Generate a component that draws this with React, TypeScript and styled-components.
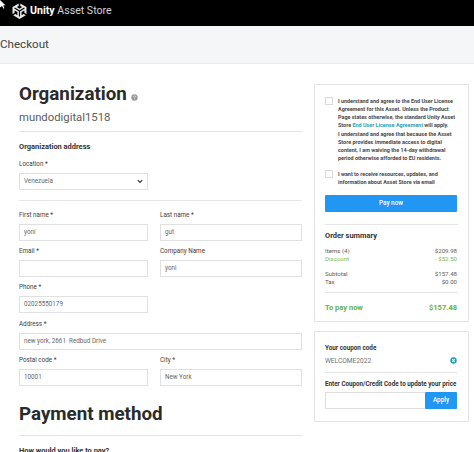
import React from "react";
import styled, { createGlobalStyle } from "styled-components";

const GlobalStyle = createGlobalStyle`
  * { box-sizing: border-box; }
  html, body { margin: 0; padding: 0; }
  body { background: #fff; font-family: Roboto, sans-serif; color: #333; }
  #root { width: 474px; height: 452px; overflow: hidden; }
`;

const Page = styled.div`
  width: 474px;
  height: 452px;
  overflow: hidden;
  display: flex;
  flex-direction: column;
`;

const TopBar = styled.header`
  flex: none;
  position: relative;
  height: 26px;
  background: #000;
  display: flex;
  align-items: center;
  padding: 0 0 4px 12px;
  gap: 3px;
  svg { flex: none; }
`;

const Cursor = styled.svg`
  position: absolute;
  left: 0;
  top: 0;
`;

const Brand = styled.span`
  color: #d4d4d4;
  font-size: 10.6px;
  line-height: 14px;
  white-space: nowrap;
  b { color: #fff; font-weight: 700; }
`;

const SubBar = styled.div`
  flex: none;
  height: 38px;
  background: #f5f6f7;
  border-bottom: 1px solid #ececec;
  font-size: 11.6px;
  line-height: 36px;
  color: #444;
`;

const Columns = styled.main`
  display: flex;
  align-items: flex-start;
  gap: 12px;
  padding-left: 19px;
`;

const FormColumn = styled.section`
  width: 283px;
  padding-top: 18px;
`;

const SideColumn = styled.aside`
  width: 155px;
  padding-top: 20px;
  display: flex;
  flex-direction: column;
  gap: 9px;
`;

const Line = styled.div<{
  $h: number; $size: number; $weight?: number; $color?: string; $mt?: number;
}>`
  height: ${(p) => p.$h}px;
  line-height: ${(p) => p.$h}px;
  margin-top: ${(p) => p.$mt ?? 0}px;
  font-size: ${(p) => p.$size}px;
  font-weight: ${(p) => p.$weight ?? 400};
  color: ${(p) => p.$color ?? "#333"};
  white-space: nowrap;
`;

const Title = styled.h1`
  margin: 0;
  height: 24px;
  display: flex;
  align-items: center;
  gap: 4px;
  font-size: 18.75px;
  font-weight: 700;
  color: #2a2a2a;
  white-space: nowrap;
  svg { margin-top: 6px; }
`;

const Rule = styled.hr<{ $mt: number }>`
  height: 1px;
  border: 0;
  margin: ${(p) => p.$mt}px 0 0;
  background: #e6e6e6;
`;

const Row = styled.div<{ $mt: number }>`
  display: grid;
  grid-template-columns: 129px 142px;
  column-gap: 12px;
  margin-top: ${(p) => p.$mt}px;
`;

const WideRow = styled.div`
  margin-top: 6px;
`;

const FieldLabel = styled.label`
  display: block;
  height: 10px;
  margin-bottom: 4px;
  font-size: 6.3px;
  line-height: 10px;
  color: #3c3c3c;
  white-space: nowrap;
`;

const Box = styled.div`
  height: 17px;
  border: 1px solid #e0e0e0;
  padding: 0 4px;
  display: flex;
  align-items: center;
  justify-content: space-between;
  font-size: 6.3px;
  line-height: 15px;
  color: #666;
  white-space: pre;
`;

const Card = styled.div<{ $h: number }>`
  height: ${(p) => p.$h}px;
  border: 1px solid #e4e4e4;
  padding: 0 10px;
`;

const Consent = styled.div<{ $mt: number }>`
  display: flex;
  gap: 5px;
  margin-top: ${(p) => p.$mt}px;
`;

const Check = styled.span`
  flex: none;
  width: 8px;
  height: 8px;
  border: 1px solid #dadada;
`;

const ConsentText = styled.div`
  font-size: 5.45px;
  font-weight: 700;
  line-height: 8.13px;
  color: #484848;
  white-space: nowrap;
`;

const ConsentLine = styled.span`
  display: block;
  em { font-style: normal; color: #2aa3b8; }
`;

const Button = styled.button`
  display: block;
  flex: none;
  border: 0;
  border-radius: 1px;
  padding: 0;
  background: #2196f3;
  color: #fff;
  font: 500 6.4px/17px Roboto, sans-serif;
  height: 17px;
`;

const PayButton = styled(Button)`
  width: 132px;
  margin-top: 9px;
`;

const Pair = styled.div<{ $mt?: number; $color?: string; $size?: number; $weight?: number }>`
  display: flex;
  justify-content: space-between;
  height: 8px;
  line-height: 8px;
  width: 132px;
  margin-top: ${(p) => p.$mt ?? 0}px;
  font-size: ${(p) => p.$size ?? 6.1}px;
  font-weight: ${(p) => p.$weight ?? 400};
  color: ${(p) => p.$color ?? "#606060"};
  white-space: nowrap;
`;

const CouponRow = styled.div`
  display: flex;
  align-items: center;
  justify-content: space-between;
  width: 132px;
  height: 10px;
  margin-top: 3px;
  font-size: 6.6px;
  color: #707070;
  svg { margin-bottom: 2px; }
`;

const ApplyRow = styled.div`
  display: flex;
  width: 132px;
  margin-top: 3px;
`;

const CodeInput = styled.div`
  flex: 1;
  height: 17px;
  border: 1px solid #dedede;
  border-right: 0;
`;

const ApplyButton = styled(Button)`
  width: 32px;
`;

const CubeLogo = () => (
  <svg width="15" height="16" viewBox="0 0 15 16">
    <path d="M6.7 0.5V3L4.8 4.1 7.5 5.7 10.2 4.1 8.3 3V0.5L14.5 4V11L12.4 9.8V7.4L9.6 9V12.2L11.6 11 13.8 12.3 7.5 15.9 1.2 12.3 3.4 11 5.4 12.2V9L2.6 7.4V9.8L0.5 11V4z" fill="#e9e9e9" />
    <path d="M2.6 5.1 7.5 8 12.4 5.1M7.5 8V13.6" stroke="#000" strokeWidth="1.2" fill="none" />
  </svg>
);

const Help = () => (
  <svg width="7" height="7" viewBox="0 0 7 7">
    <circle cx="3.5" cy="3.5" r="3.2" fill="#999" />
    <path d="M2.5 2.8Q2.6 1.9 3.5 1.9T4.5 2.8Q4.5 3.3 3.5 3.8V4.2M3.5 4.8v.6" stroke="#eee" strokeWidth=".7" fill="none" />
  </svg>
);

const Chevron = () => (
  <svg width="6" height="5" viewBox="0 0 6 5">
    <path d="M.8 1.2 3 3.4 5.2 1.2" stroke="#333" strokeWidth="1.2" fill="none" />
  </svg>
);

const Remove = () => (
  <svg width="7" height="7" viewBox="0 0 7 7">
    <circle cx="3.5" cy="3.5" r="3.2" fill="#1b9fb4" />
    <path d="M2.2 2.2 4.8 4.8M4.8 2.2 2.2 4.8" stroke="#fff" strokeWidth="1.1" />
  </svg>
);

const Field = ({ label, value }: { label: string; value: string }) => (
  <div>
    <FieldLabel>{label}</FieldLabel>
    <Box>{value}</Box>
  </div>
);

export default function App() {
  return (
    <Page>
      <GlobalStyle />
      <TopBar>
        <Cursor width="6" height="9" viewBox="0 0 6 9">
          <path d="M0 0 5.4 5.2 3.2 5.4 4.5 8.2 3.3 8.6 2 5.9 0 7.5z" fill="#fff" />
        </Cursor>
        <CubeLogo />
        <Brand><b>Unity</b> Asset Store</Brand>
      </TopBar>
      <SubBar>Checkout</SubBar>
      <Columns>
        <FormColumn>
          <Title>Organization <Help /></Title>
          <Line $h={16} $size={11.3} $mt={4} $color="#5c5c5c">mundodigital1518</Line>
          <Rule $mt={5} />
          <Line $h={12} $size={7.45} $weight={700} $mt={9}>Organization address</Line>
          <Row $mt={6}>
            <div>
              <FieldLabel>Location *</FieldLabel>
              <Box>Venezuela<Chevron /></Box>
            </div>
          </Row>
          <Rule $mt={10} />
          <Row $mt={9}>
            <Field label="First name *" value="yoni" />
            <Field label="Last name *" value="gut" />
          </Row>
          <Row $mt={5}>
            <Field label="Email *" value="" />
            <Field label="Company Name" value="yoni" />
          </Row>
          <Row $mt={5}>
            <Field label="Phone *" value="02025550179" />
          </Row>
          <WideRow>
            <Field label="Address *" value="new york, 2661  Redbud Drive" />
          </WideRow>
          <Row $mt={5}>
            <Field label="Postal code *" value="10001" />
            <Field label="City *" value="New York" />
          </Row>
          <Line $h={24} $size={18.75} $weight={700} $mt={16} $color="#2a2a2a">Payment method</Line>
          <Rule $mt={9} />
          <Line $h={12} $size={7.45} $weight={700} $mt={9}>How would you like to pay?</Line>
        </FormColumn>
        <SideColumn>
          <Card $h={238}>
            <Consent $mt={12}>
              <Check />
              <ConsentText>
                <ConsentLine>I understand and agree to the End User License</ConsentLine>
                <ConsentLine>Agreement for this Asset. Unless the Product</ConsentLine>
                <ConsentLine>Page states otherwise, the standard Unity Asset</ConsentLine>
                <ConsentLine>Store <em>End User License Agreement</em> will apply.</ConsentLine>
                <ConsentLine>I understand and agree that because the Asset</ConsentLine>
                <ConsentLine>Store provides immediate access to digital</ConsentLine>
                <ConsentLine>content, I am waiving the 14-day withdrawal</ConsentLine>
                <ConsentLine>period otherwise afforded to EU residents.</ConsentLine>
              </ConsentText>
            </Consent>
            <Consent $mt={8}>
              <Check />
              <ConsentText>
                <ConsentLine>I want to receive resources, updates, and</ConsentLine>
                <ConsentLine>information about Asset Store via email</ConsentLine>
              </ConsentText>
            </Consent>
            <PayButton>Pay now</PayButton>
            <Rule $mt={12} />
            <Line $h={10} $size={7.45} $weight={700} $mt={6}>Order summary</Line>
            <Pair $mt={6}><span>Items (4)</span><span>$209.98</span></Pair>
            <Pair $color="#7cb955"><span>Discount</span><span>- $52.50</span></Pair>
            <Pair $mt={7}><span>Subtotal</span><span>$157.48</span></Pair>
            <Pair><span>Tax</span><span>$0.00</span></Pair>
            <Rule $mt={6} />
            <Pair $mt={11} $color="#6bb03c" $size={7.5} $weight={700}>
              <span>To pay now</span><span>$157.48</span>
            </Pair>
          </Card>
          <Card $h={91}>
            <Line $h={10} $size={6.35} $weight={700} $mt={11}>Your coupon code</Line>
            <CouponRow>WELCOME2022<Remove /></CouponRow>
            <Rule $mt={6} />
            <Line $h={10} $size={6.27} $weight={700} $mt={6}>Enter Coupon/Credit Code to update your price</Line>
            <ApplyRow><CodeInput /><ApplyButton>Apply</ApplyButton></ApplyRow>
          </Card>
        </SideColumn>
      </Columns>
    </Page>
  );
}
